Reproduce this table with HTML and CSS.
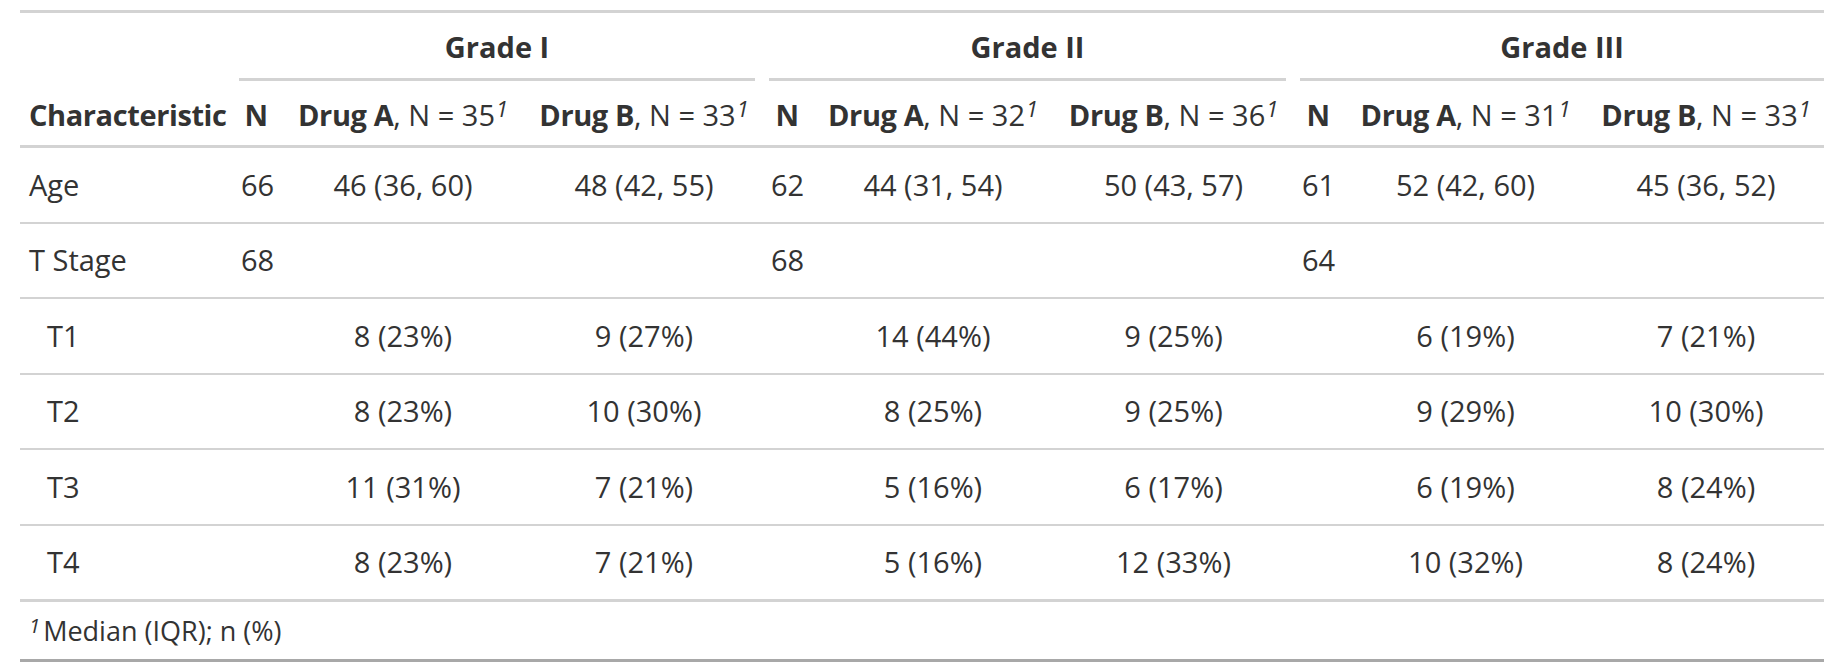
FILE: index.html
```html
<!DOCTYPE html>
<html>
<head>
<meta charset="utf-8">
<link rel="stylesheet" href="styles.css">
</head>
<body>
<div class="wrap">
<table class="gt">
  <colgroup>
    <col class="c-char"><col class="c-n"><col class="c-a1"><col class="c-b1">
    <col class="c-n2"><col class="c-a2"><col class="c-b2">
    <col class="c-n2"><col class="c-a3"><col class="c-b3">
  </colgroup>
  <thead>
    <tr class="spanners">
      <th class="sp sp-first"></th>
      <th class="sp" colspan="3"><div class="sp-label">Grade I</div></th>
      <th class="sp" colspan="3"><div class="sp-label">Grade II</div></th>
      <th class="sp sp-last" colspan="3"><div class="sp-label">Grade III</div></th>
    </tr>
    <tr class="heads">
      <th class="h left"><b>Characteristic</b></th>
      <th class="h"><b>N</b></th>
      <th class="h"><b>Drug A</b>, N = 35<sup class="fm">1</sup></th>
      <th class="h"><b>Drug B</b>, N = 33<sup class="fm">1</sup></th>
      <th class="h"><b>N</b></th>
      <th class="h"><b>Drug A</b>, N = 32<sup class="fm">1</sup></th>
      <th class="h"><b>Drug B</b>, N = 36<sup class="fm">1</sup></th>
      <th class="h"><b>N</b></th>
      <th class="h"><b>Drug A</b>, N = 31<sup class="fm">1</sup></th>
      <th class="h"><b>Drug B</b>, N = 33<sup class="fm">1</sup></th>
    </tr>
  </thead>
  <tbody>
    <tr>
      <td class="left">Age</td><td>66</td><td>46 (36, 60)</td><td>48 (42, 55)</td>
      <td>62</td><td>44 (31, 54)</td><td>50 (43, 57)</td>
      <td>61</td><td>52 (42, 60)</td><td>45 (36, 52)</td>
    </tr>
    <tr>
      <td class="left">T Stage</td><td>68</td><td></td><td></td>
      <td>68</td><td></td><td></td>
      <td>64</td><td></td><td></td>
    </tr>
    <tr>
      <td class="left indent">T1</td><td></td><td>8 (23%)</td><td>9 (27%)</td>
      <td></td><td>14 (44%)</td><td>9 (25%)</td>
      <td></td><td>6 (19%)</td><td>7 (21%)</td>
    </tr>
    <tr>
      <td class="left indent">T2</td><td></td><td>8 (23%)</td><td>10 (30%)</td>
      <td></td><td>8 (25%)</td><td>9 (25%)</td>
      <td></td><td>9 (29%)</td><td>10 (30%)</td>
    </tr>
    <tr>
      <td class="left indent">T3</td><td></td><td>11 (31%)</td><td>7 (21%)</td>
      <td></td><td>5 (16%)</td><td>6 (17%)</td>
      <td></td><td>6 (19%)</td><td>8 (24%)</td>
    </tr>
    <tr class="last">
      <td class="left indent">T4</td><td></td><td>8 (23%)</td><td>7 (21%)</td>
      <td></td><td>5 (16%)</td><td>12 (33%)</td>
      <td></td><td>10 (32%)</td><td>8 (24%)</td>
    </tr>
  </tbody>
  <tfoot>
    <tr>
      <td class="foot" colspan="10"><sup class="fm fm-foot">1</sup>Median (IQR); n (%)</td>
    </tr>
  </tfoot>
</table>
</div>
</body>
</html>
```

FILE: styles.css
```css
html, body {
  margin: 0;
  padding: 0;
  background: #ffffff;
}

.wrap {
  padding: 10px 14px 0 20px;
}

.gt {
  font-family: "Open Sans", "Noto Sans", sans-serif;
  font-size: 29px;
  color: #333333;
  border-collapse: separate;
  border-spacing: 0;
  table-layout: fixed;
  width: 1804px;
  border-top: 3px solid #D3D3D3;
  border-bottom: 3px solid #A8A8A8;
}

.c-char { width: 212px; }
.c-n { width: 48px; }
.c-a1 { width: 246px; }
.c-b1 { width: 236px; }
.c-n2 { width: 50px; }
.c-a2 { width: 242px; }
.c-b2 { width: 239px; }
.c-a3 { width: 245px; }
.c-b3 { width: 236px; }

th, td {
  line-height: 38px;
  white-space: nowrap;
  text-align: center;
}

.sp {
  padding: 15px 7px 0 7px;
  font-weight: 700;
}
.sp-first { padding-left: 0; }
.sp-last { padding-right: 0; }

.sp-label {
  padding-bottom: 12px;
  border-bottom: 3px solid #D3D3D3;
}

.h {
  font-weight: 400;
  padding: 15px 9px 11px 9px;
  border-bottom: 3px solid #D3D3D3;
  vertical-align: bottom;
}

.h b {
  font-weight: 700;
  letter-spacing: -0.4px;
}

.left { text-align: left; }

td {
  padding: 17.75px 9px;
  border-bottom: 2px solid #D3D3D3;
  vertical-align: middle;
}

tbody tr.last td {
  border-bottom: 3px solid #D3D3D3;
}

td.indent {
  padding-left: 27px;
}

.fm {
  font-size: 75%;
  font-style: italic;
  font-weight: 400;
  vertical-align: 0.4em;
  line-height: 0;
  padding-left: 1px;
}

td.foot {
  font-size: 27px;
  line-height: 35px;
  padding: 11px 9px;
  text-align: left;
  border-bottom: none;
}

.fm-foot {
  padding-left: 0;
  padding-right: 3px;
}
```
